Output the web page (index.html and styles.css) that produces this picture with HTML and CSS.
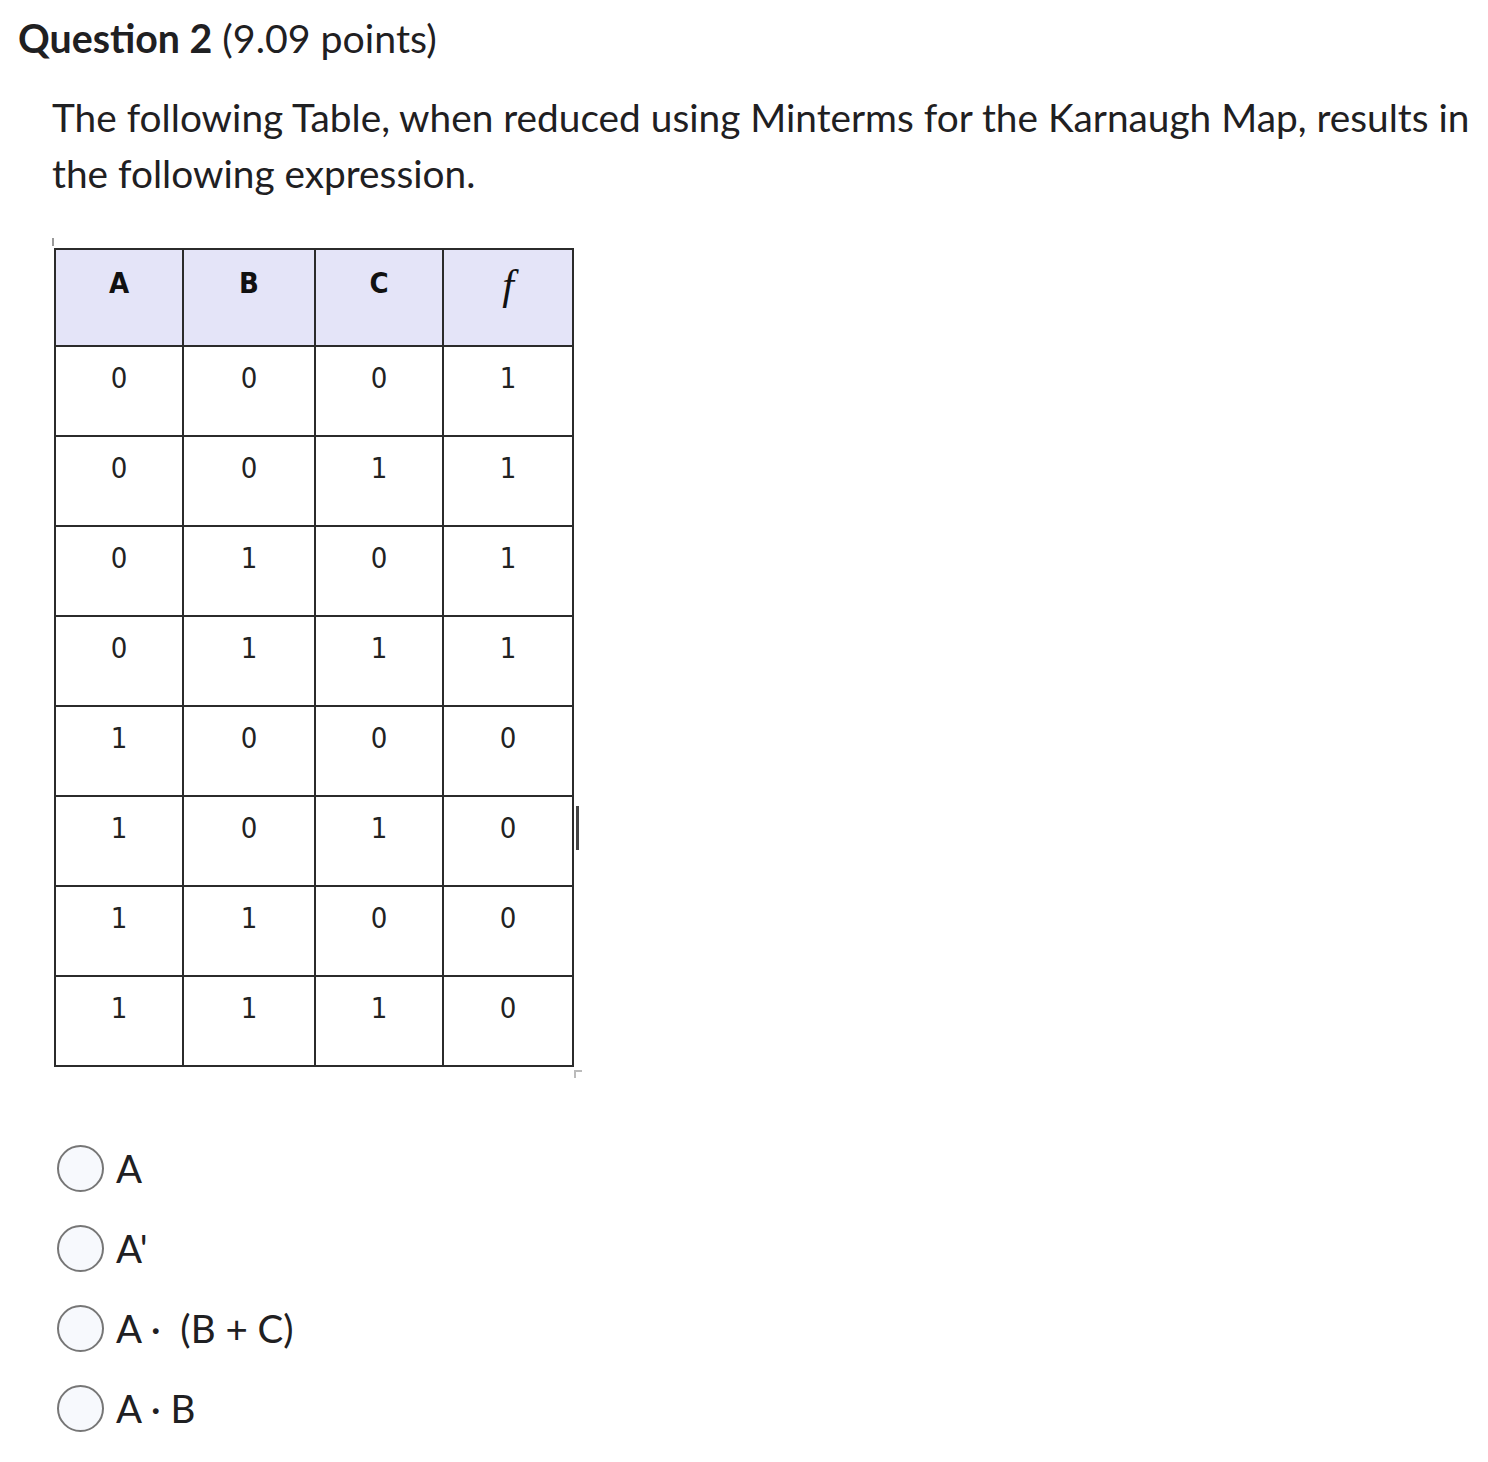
FILE: index.html
```html
<!DOCTYPE html>
<html>
<head>
<meta charset="utf-8">
<link rel="stylesheet" href="styles.css">
</head>
<body>
<div class="question">
  <h2 class="title"><strong>Question 2</strong> (9.09 points)</h2>
  <div class="content">
    <p class="prompt">The following Table, when reduced using Minterms for the Karnaugh Map, results in the following expression.</p>
    <div class="table-wrap">
      <span class="mark mark-tl"></span>
      <span class="mark mark-side"></span>
      <span class="mark mark-br"></span>
      <table class="truth">
        <colgroup>
          <col class="c1"><col class="c2"><col class="c3"><col class="c4">
        </colgroup>
        <thead>
          <tr><th>A</th><th>B</th><th>C</th><th class="fn">f</th></tr>
        </thead>
        <tbody>
          <tr><td>0</td><td>0</td><td>0</td><td>1</td></tr>
          <tr><td>0</td><td>0</td><td>1</td><td>1</td></tr>
          <tr><td>0</td><td>1</td><td>0</td><td>1</td></tr>
          <tr><td>0</td><td>1</td><td>1</td><td>1</td></tr>
          <tr><td>1</td><td>0</td><td>0</td><td>0</td></tr>
          <tr><td>1</td><td>0</td><td>1</td><td>0</td></tr>
          <tr><td>1</td><td>1</td><td>0</td><td>0</td></tr>
          <tr><td>1</td><td>1</td><td>1</td><td>0</td></tr>
        </tbody>
      </table>
    </div>
    <ul class="options">
      <li class="option"><span class="radio"></span><span class="label">A</span></li>
      <li class="option"><span class="radio"></span><span class="label">A'</span></li>
      <li class="option"><span class="radio"></span><span class="label">A ·&nbsp; (B + C)</span></li>
      <li class="option"><span class="radio"></span><span class="label">A · B</span></li>
    </ul>
  </div>
</div>
</body>
</html>
```
FILE: styles.css
```css
html, body {
  margin: 0;
  padding: 0;
  background: #ffffff;
}
body {
  font-family: Lato, "Noto Sans", sans-serif;
  color: #1f2022;
}
.question {
  padding: 12px 0 0 18px;
}
.title {
  margin: 0;
  font-size: 39.3px;
  line-height: 52px;
  font-weight: 400;
}
.title strong {
  font-weight: 700;
}
.content {
  padding-left: 34px;
}
.prompt {
  margin: 25px 0 0 0;
  font-size: 38.8px;
  line-height: 56px;
}
.table-wrap {
  position: relative;
  margin-top: 47px;
  margin-left: 2px;
  width: 520px;
}
.truth {
  border-collapse: collapse;
  width: 520px;
  table-layout: fixed;
}
.c1 { width: 128px; }
.c2 { width: 132px; }
.c3 { width: 128px; }
.c4 { width: 130px; }
.truth th, .truth td {
  border: 2px solid #2b2b2b;
  text-align: center;
  vertical-align: top;
  padding: 0;
}
.truth th {
  background: #e4e4f8;
  height: 97px;
  font-family: "DejaVu Sans Condensed", "DejaVu Sans", sans-serif;
  font-weight: 700;
  font-size: 29px;
  line-height: 30px;
  padding-top: 18px;
  color: #111;
  box-sizing: border-box;
}
.truth th.fn {
  font-family: "Liberation Serif", serif;
  font-style: italic;
  font-weight: 400;
  font-size: 42px;
  line-height: 42px;
  padding-top: 14px;
}
.truth td {
  height: 90px;
  box-sizing: border-box;
  font-family: "DejaVu Sans Condensed", "DejaVu Sans", sans-serif;
  font-size: 29px;
  line-height: 32px;
  padding-top: 15px;
  color: #222;
}
.mark {
  position: absolute;
  background: #9a9a9a;
}
.mark-tl {
  left: -2px;
  top: -10px;
  width: 2px;
  height: 8px;
}
.mark-side {
  left: 522px;
  top: 558px;
  width: 3px;
  height: 44px;
  background: #444;
}
.mark-br {
  left: 520px;
  top: 822px;
  width: 6px;
  height: 6px;
  background: transparent;
  border-left: 2px solid #bbb;
  border-top: 2px solid #bbb;
}
.options {
  list-style: none;
  margin: 61px 0 0 0;
  padding: 0;
}
.option {
  display: flex;
  align-items: center;
  gap: 12px;
  height: 80px;
  margin-left: 5px;
}
.radio {
  width: 43px;
  height: 43px;
  border: 2px solid #767676;
  border-radius: 50%;
  background: #f7f9fd;
  flex: none;
}
.label {
  font-size: 38.5px;
  line-height: 40px;
  color: #1f2022;
}
```
